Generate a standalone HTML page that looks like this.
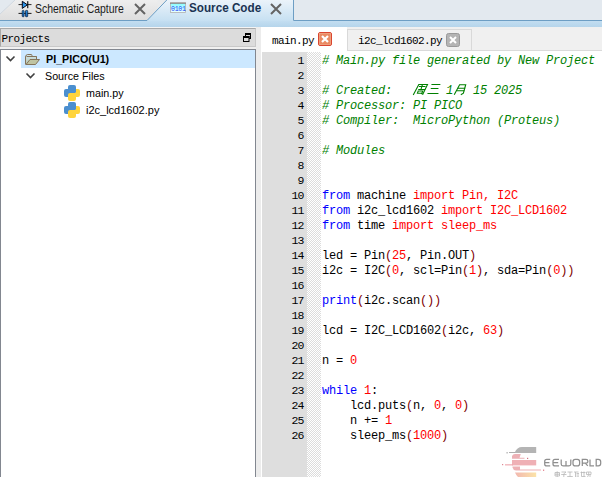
<!DOCTYPE html>
<html><head><meta charset="utf-8">
<style>
*{margin:0;padding:0;box-sizing:border-box}
html,body{width:602px;height:477px;overflow:hidden;background:#fff;position:relative;font-family:"Liberation Sans",sans-serif}
.a{position:absolute}
#tabbar{left:0;top:0;width:602px;height:21px;background:#e3e9ef}
#band{left:0;top:21px;width:602px;height:6px;background:linear-gradient(#c3def1,#b5d5eb)}
.mono{font-family:"Liberation Mono",monospace}
#phdr{left:0;top:28px;width:256px;height:19px;background:#dcdcdc;border:1px solid #a9a9a9;border-right-color:#c8c8c8;border-bottom-color:#c8c8c8}
#tree{left:0;top:49px;width:256px;height:428px;background:#fff;border-left:1px solid #828790;border-top:1px solid #828790;border-right:1px solid #828790}
#split{left:256px;top:27px;width:5px;height:450px;background:#ececec}
#editor{left:261px;top:27px;width:341px;height:450px;background:#fff}
#gutter{left:262px;top:52px;width:45px;height:425px;background:#dedede}
#fold{left:307px;top:52px;width:14px;height:425px}
.ln{position:absolute;left:262px;width:41.5px;text-align:right;font-family:"Liberation Mono",monospace;font-size:11.5px;letter-spacing:-0.9px;line-height:15px;color:#000}
.code{position:absolute;left:322px;font-family:"Liberation Mono",monospace;font-size:12px;letter-spacing:-0.2px;line-height:15px;white-space:pre;color:#000}
.c{color:#008000;font-style:italic}
.k{color:#0000ff}
.r{color:#ff0000}
.p{color:#800000}
.cjk{display:inline-block;width:13px;height:10px}
.tr{position:absolute;font-size:11px;line-height:17px;color:#000;white-space:pre;transform:scaleX(0.975);transform-origin:0 0}
</style></head><body>
<div id="tabbar" class="a"></div>
<svg class="a" style="left:0;top:0" width="602" height="21" viewBox="0 0 602 21">
  <defs>
    <linearGradient id="gt" x1="0" y1="0" x2="0" y2="1"><stop offset="0" stop-color="#eeeeee"/><stop offset="1" stop-color="#dedede"/></linearGradient>
    <linearGradient id="bt" x1="0" y1="0" x2="0" y2="1"><stop offset="0" stop-color="#ebf3fa"/><stop offset="1" stop-color="#c6e0f2"/></linearGradient>
  </defs>
  <polygon points="15,0 167,0 147.5,20 0,20 0,14" fill="url(#gt)"/>
  <line x1="0" y1="14" x2="15" y2="0" stroke="#d0d8e0" stroke-width="1"/>
  <polygon points="157.5,0 166.8,0 157.5,9.3" fill="#eaebec"/>
  <polygon points="166.5,0 293,0 293,21 146.5,21" fill="url(#bt)"/>
  <polyline points="0,20.5 147,20.5 166.8,0" fill="none" stroke="#6d9ec4" stroke-width="1"/>
  <polyline points="293.5,0 293.5,20.5 602,20.5" fill="none" stroke="#6d9ec4" stroke-width="1"/>
</svg>
<div id="band" class="a"></div>
<div class="a" style="left:0;top:27px;width:261px;height:1px;background:#f4f4f4"></div>
<div id="phdr" class="a"></div>
<div class="a" style="left:0;top:47px;width:256px;height:2px;background:#f0f0f0"></div>
<div id="tree" class="a"></div>
<div id="split" class="a"></div>
<div id="editor" class="a"></div>

<!-- tab bar content -->
<svg class="a" style="left:17px;top:0" width="16" height="19" viewBox="0 0 16 19">
  <defs><linearGradient id="dg" x1="0" y1="0" x2="1" y2="1"><stop offset="0" stop-color="#1a78d8"/><stop offset="1" stop-color="#40b8ff"/></linearGradient>
  <linearGradient id="cg" x1="0" y1="0" x2="0" y2="1"><stop offset="0" stop-color="#2a90e0"/><stop offset="1" stop-color="#1060b8"/></linearGradient></defs>
  <line x1="1.5" y1="4.6" x2="14.5" y2="4.6" stroke="#2a2a2a" stroke-width="1"/>
  <polygon points="5.3,1.3 10.4,4.8 5.3,8.4" fill="url(#dg)" stroke="#050a18" stroke-width="1" stroke-linejoin="round"/>
  <rect x="10.2" y="1.2" width="1.1" height="7" fill="#050505"/>
  <line x1="1.5" y1="13.4" x2="14.5" y2="13.4" stroke="#1a1a1a" stroke-width="1"/>
  <rect x="5.2" y="10.4" width="1.9" height="6.3" rx="0.6" fill="url(#cg)" stroke="#05203f" stroke-width="0.7"/>
  <rect x="8.5" y="10.4" width="2.2" height="6.3" rx="0.6" fill="url(#cg)" stroke="#05203f" stroke-width="0.7"/>
</svg>
<div class="a" id="t1" style="left:35px;top:2px;font-size:12.5px;line-height:14px;color:#1b1b1b;white-space:pre;transform:scaleX(0.835);transform-origin:0 0">Schematic Capture</div>
<svg class="a" style="left:133px;top:2px" width="14" height="14" viewBox="0 0 14 14"><path d="M2 2L12 12M12 2L2 12" stroke="#646464" stroke-width="2"/></svg>
<svg class="a" style="left:170px;top:2px" width="16" height="11" viewBox="0 0 16 11"><defs><linearGradient id="cy" x1="0" y1="0" x2="0" y2="1"><stop offset="0" stop-color="#80fcff"/><stop offset="1" stop-color="#f0ffff"/></linearGradient></defs><rect x="0.5" y="1" width="15" height="9.5" fill="url(#cy)" stroke="#b0b0b0" stroke-width="0.8"/><rect x="0" y="0.6" width="16" height="1" fill="#857070"/><text x="1" y="8.8" font-family="Liberation Mono" font-size="6.6" fill="#1a40f8" letter-spacing="-0.3">0101</text></svg>
<div class="a" id="t2" style="left:188.5px;top:1px;font-size:12px;line-height:14px;font-weight:bold;color:#1a3352;white-space:pre;transform:scaleX(0.975);transform-origin:0 0">Source Code</div>
<svg class="a" style="left:269px;top:2px" width="14" height="14" viewBox="0 0 14 14"><path d="M2 2L12 12M12 2L2 12" stroke="#646464" stroke-width="2"/></svg>
<!-- projects header -->
<div class="a mono" style="left:1.5px;top:31.5px;font-size:11px;letter-spacing:-0.6px;line-height:14px;color:#000;white-space:pre">Projects</div>
<svg class="a" style="left:242px;top:32px" width="11" height="11" viewBox="0 0 11 11">
 <rect x="3.5" y="1.5" width="5" height="5" fill="none" stroke="#000" stroke-width="1"/><rect x="3" y="1" width="6" height="2" fill="#000"/>
 <rect x="1.5" y="4.5" width="5.5" height="5" fill="#dcdcdc" stroke="#000" stroke-width="1"/><rect x="1" y="4" width="6.5" height="2" fill="#000"/>
</svg>
<!-- tree -->
<div class="a" style="left:21px;top:50px;width:234px;height:18px;background:#cce8ff"></div>
<svg class="a" style="left:5px;top:55px" width="11" height="8" viewBox="0 0 11 8"><path d="M1.5 1.5L5.5 5.5L9.5 1.5" fill="none" stroke="#404040" stroke-width="1.6"/></svg>
<svg class="a" style="left:25px;top:72px" width="11" height="8" viewBox="0 0 11 8"><path d="M1.5 1.5L5.5 5.5L9.5 1.5" fill="none" stroke="#404040" stroke-width="1.6"/></svg>
<svg class="a" style="left:24px;top:53px" width="18" height="13" viewBox="0 0 18 13">
 <defs><linearGradient id="fb" x1="0" y1="0" x2="0" y2="1"><stop offset="0" stop-color="#cfe6ee"/><stop offset="1" stop-color="#b9c6ae"/></linearGradient></defs>
 <path d="M1.5 11.5V3.2Q1.5 2.5 2.5 2.5V2Q2.5 1.5 3.5 1.5H7Q8 1.5 8 2.5V3.5H12.5V6.5" fill="url(#fb)" stroke="#84745a" stroke-width="1"/>
 <path d="M2.5 3.5H12.5" stroke="#84745a" stroke-width="1"/>
 <path d="M2 11.5L6 6.5H15.5L11.5 11.5Z" fill="#bfc4a2" stroke="#84745a" stroke-width="1"/>
</svg>
<div class="tr" style="left:46px;top:51px;font-weight:bold">PI_PICO(U1)</div>
<div class="tr" style="left:45px;top:68px">Source Files</div>
<svg class="a" style="left:63px;top:84px" width="18" height="18" viewBox="0 0 18 18">
 <rect x="10" y="5" width="7" height="8" rx="2" fill="#ffd43b"/><rect x="5" y="1" width="8" height="8.3" rx="2" fill="#4b8fcf"/><rect x="1" y="5" width="8" height="8" rx="2" fill="#4b8fcf"/><rect x="5" y="9" width="8" height="8" rx="2" fill="#ffd43b"/><rect x="9" y="9" width="4" height="3" fill="#ffd43b"/>
</svg>
<div class="tr" style="left:86px;top:85px">main.py</div>
<svg class="a" style="left:63px;top:101px" width="18" height="18" viewBox="0 0 18 18">
 <rect x="10" y="5" width="7" height="8" rx="2" fill="#ffd43b"/><rect x="5" y="1" width="8" height="8.3" rx="2" fill="#4b8fcf"/><rect x="1" y="5" width="8" height="8" rx="2" fill="#4b8fcf"/><rect x="5" y="9" width="8" height="8" rx="2" fill="#ffd43b"/><rect x="9" y="9" width="4" height="3" fill="#ffd43b"/>
</svg>
<div class="tr" style="left:86px;top:102px;transform:none">i2c_lcd1602.py</div>
<!-- editor tabs -->
<div class="a" style="left:261px;top:27px;width:341px;height:24px;background:#f0f0f0;border-bottom:1px solid #dadada"></div>
<div class="a" style="left:261px;top:27px;width:86px;height:24px;background:#fff"></div>
<div class="a" style="left:347px;top:29px;width:125px;height:22px;background:#f0f0f0;border:1px solid #d9d9d9"></div>
<div class="a mono" style="left:272px;top:33.5px;font-size:11px;letter-spacing:-0.6px;line-height:14px;color:#000;white-space:pre">main.py</div>
<svg class="a" style="left:318px;top:32px" width="14" height="14" viewBox="0 0 14 14"><rect x="0.5" y="0.5" width="13" height="13" rx="1.5" fill="#e98a62" stroke="#da4630"/><rect x="1.5" y="1.5" width="11" height="11" fill="none" stroke="#f0a888" stroke-width="0.7"/><path d="M4 4L10 10M10 4L4 10" stroke="#fff" stroke-width="2.2"/></svg>
<div class="a mono" style="left:358px;top:33.5px;font-size:11px;letter-spacing:-0.6px;line-height:14px;color:#000;white-space:pre">i2c_lcd1602.py</div>
<svg class="a" style="left:446px;top:33px" width="14" height="14" viewBox="0 0 14 14"><rect x="0.5" y="0.5" width="13" height="13" rx="2" fill="#b4b4b4" stroke="#9a9a9a"/><path d="M4 4L10 10M10 4L4 10" stroke="#fff" stroke-width="2"/></svg>
<div id="gutter" class="a"></div>
<svg id="fold" class="a" width="14" height="425"><defs><pattern id="ck" width="2" height="2" patternUnits="userSpaceOnUse"><rect width="2" height="2" fill="#fff"/><rect width="1" height="1" fill="#dcdcdc"/><rect x="1" y="1" width="1" height="1" fill="#dcdcdc"/></pattern></defs><rect width="14" height="425" fill="url(#ck)"/></svg>
<div class="ln" style="top:53px">1</div>
<div class="ln" style="top:68px">2</div>
<div class="ln" style="top:83px">3</div>
<div class="ln" style="top:98px">4</div>
<div class="ln" style="top:113px">5</div>
<div class="ln" style="top:128px">6</div>
<div class="ln" style="top:143px">7</div>
<div class="ln" style="top:158px">8</div>
<div class="ln" style="top:173px">9</div>
<div class="ln" style="top:188px">10</div>
<div class="ln" style="top:203px">11</div>
<div class="ln" style="top:218px">12</div>
<div class="ln" style="top:233px">13</div>
<div class="ln" style="top:248px">14</div>
<div class="ln" style="top:263px">15</div>
<div class="ln" style="top:278px">16</div>
<div class="ln" style="top:293px">17</div>
<div class="ln" style="top:308px">18</div>
<div class="ln" style="top:323px">19</div>
<div class="ln" style="top:338px">20</div>
<div class="ln" style="top:353px">21</div>
<div class="ln" style="top:368px">22</div>
<div class="ln" style="top:383px">23</div>
<div class="ln" style="top:398px">24</div>
<div class="ln" style="top:413px">25</div>
<div class="ln" style="top:428px">26</div>
<div class="code" style="top:54px"><span class="c"># Main.py file generated by New Project</span></div>
<div class="code" style="top:84px"><span class="c"># Created:   <span id="zhou" class="cjk"></span><span id="san" class="cjk"></span> 1<span id="yue" class="cjk"></span> 15 2025</span></div>
<div class="code" style="top:99px"><span class="c"># Processor: PI PICO</span></div>
<div class="code" style="top:114px"><span class="c"># Compiler:  MicroPython (Proteus)</span></div>
<div class="code" style="top:144px"><span class="c"># Modules</span></div>
<div class="code" style="top:189px"><span class="k">from</span> machine <span class="r">import Pin, I2C</span></div>
<div class="code" style="top:204px"><span class="k">from</span> i2c_lcd1602 <span class="r">import I2C_LCD1602</span></div>
<div class="code" style="top:219px"><span class="k">from</span> time <span class="r">import sleep_ms</span></div>
<div class="code" style="top:249px">led = Pin<span class="p">(</span><span class="r">25</span>, Pin.OUT<span class="p">)</span></div>
<div class="code" style="top:264px">i2c = I2C<span class="p">(</span><span class="r">0</span>, scl=Pin<span class="p">(</span><span class="r">1</span><span class="p">)</span>, sda=Pin<span class="p">(</span><span class="r">0</span><span class="p">))</span></div>
<div class="code" style="top:294px"><span class="k">print</span><span class="p">(</span>i2c.scan<span class="p">())</span></div>
<div class="code" style="top:324px">lcd = I2C_LCD1602<span class="p">(</span>i2c, <span class="r">63</span><span class="p">)</span></div>
<div class="code" style="top:354px">n = <span class="r">0</span></div>
<div class="code" style="top:384px"><span class="k">while</span> <span class="r">1</span>:</div>
<div class="code" style="top:399px">    lcd.puts<span class="p">(</span>n, <span class="r">0</span>, <span class="r">0</span><span class="p">)</span></div>
<div class="code" style="top:414px">    n += <span class="r">1</span></div>
<div class="code" style="top:429px">    sleep_ms<span class="p">(</span><span class="r">1000</span><span class="p">)</span></div>
<svg class="a" style="left:400px;top:78px" width="80" height="20" viewBox="400 78 80 20" fill="none" stroke="#008000" stroke-width="1.1" stroke-linecap="square">
 <path d="M413.5 94.5L418.8 84.5H427.5L422.8 94.3L421.5 93.6"/>
 <path d="M419.5 86.5H425M422.3 85L420.9 89.6M418.8 89.5H424.6"/>
 <path d="M418.2 91H422.8L421.9 93.3H417.4Z"/>
 <path d="M432 84.5H439.8M431.3 88.5H437.9M428 93.5H437.9"/>
 <path d="M454.5 94.3L459.6 84.7H465.7L463.4 93.2L461.3 94.5"/>
 <path d="M458.3 88.2H464.6M457.4 90.8H463.8"/>
</svg>
<svg class="a" style="left:500px;top:440px" width="102" height="37" viewBox="500 440 102 37">
 <defs><linearGradient id="lg" x1="0" y1="0" x2="1" y2="0"><stop offset="0" stop-color="#f2b8b0"/><stop offset="1" stop-color="#fbe3a8"/></linearGradient></defs>
 <path d="M509.5 452.9H514.5Q517 447 522 447H536.2V452.9H509.5Z" fill="#b4b4b4"/>
 <rect x="506.5" y="452.2" width="1.2" height="1.2" fill="#9a9a9a"/><rect x="509" y="452.1" width="6" height="0.9" fill="#a8a8a8"/>
 <path d="M512 458.8V456Q513 454 515 454H520.8L519.5 457.8H524.5V458.8Z" fill="#ecb0b5"/>
 <rect x="527" y="457.8" width="1.2" height="1.2" fill="#d07080"/>
 <rect x="512" y="460" width="24.2" height="5.4" fill="#efb0b5"/>
 <rect x="505" y="464.3" width="8" height="1.1" fill="#eda4ab"/>
 <rect x="502" y="464" width="1.2" height="1.2" fill="#e08a94"/>
 <path d="M512.5 466.6H520V469.4H541V470.5H516Q513 470 512.5 467.5Z" fill="#edb0b4"/>
 <rect x="543" y="469.6" width="1.2" height="1.2" fill="#e07080"/>
 <path d="M515 472.5H536.2V477H518Q516 475 515 472.5Z" fill="url(#lg)"/>
 <path d="M550.1999999999999 459.4H546.7Q544.7 459.4 544.7 461.4V463.9Q544.7 465.9 546.7 465.9H550.1999999999999M544.7 462.65H549.4 M559.0 459.4H555.0Q553.0 459.4 553.0 461.4V463.9Q553.0 465.9 555.0 465.9H559.0M553.0 462.65H558.2 M561.2 459.4V464.09999999999997Q561.2 465.9 563.0 465.9H569.0Q570.8 465.9 570.8 464.09999999999997V459.4M566.0 460.9V465.9 M575.2 459.4H577.4Q579.6 459.4 579.6 461.59999999999997V463.7Q579.6 465.9 577.4 465.9H575.2Q573.0 465.9 573.0 463.7V461.59999999999997Q573.0 459.4 575.2 459.4Z M582.3000000000001 465.9V459.4H586.0Q587.8 459.4 587.8 461.0V462.04999999999995Q587.8 463.04999999999995 586.0 463.04999999999995H582.3000000000001M585.3000000000001 463.04999999999995L587.8 465.9 M590.0 459.4V465.9H594.0 M596.2 459.4H598.3Q600.6999999999999 459.4 600.6999999999999 461.79999999999995V463.5Q600.6999999999999 465.9 598.3 465.9H596.2Z" fill="none" stroke="#8f8f8f" stroke-width="1.25"/>
 <g stroke="#b8b8b8" stroke-width="0.8" fill="none">
  <path d="M555 472.5H559.5V476H555ZM555 474.2H559.5M557.2 471.3V477"/>
  <path d="M561.5 472H566L563.8 473.8V477M561.2 474.5H566.5"/>
  <path d="M567.5 472H572.5M570 472V476.5M567.2 476.5H572.8"/>
  <path d="M574 472H578.5M575.5 472V477M576.5 473.5H579M576.5 475H579M576.5 476.8H579"/>
  <path d="M580.5 472.5H585.5M581.5 471.5V476.5M584 471.5V476.5M581.5 476.5H585.5"/>
  <path d="M586.5 472H591V474.5H586.5ZM588.7 472V474.5M587.5 477L588.5 475M590 475V477"/>
 </g>
</svg>
</body></html>
